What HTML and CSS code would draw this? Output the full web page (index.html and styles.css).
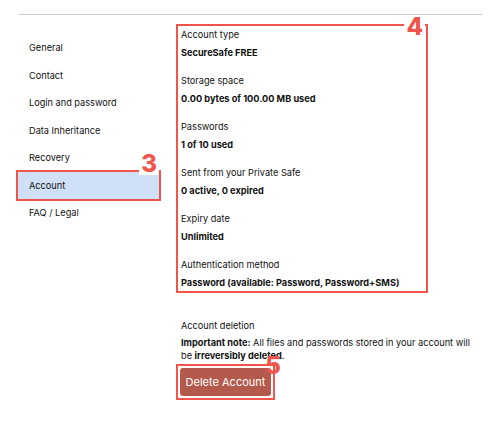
FILE: index.html
```html
<!DOCTYPE html>
<html>
<head>
<meta charset="utf-8">
<link rel="stylesheet" href="styles.css">
</head>
<body>
<div class="page">
  <div class="layout">
    <nav class="sidenav">
      <div class="nav-item">General</div>
      <div class="nav-item">Contact</div>
      <div class="nav-item">Login and password</div>
      <div class="nav-item">Data Inheritance</div>
      <div class="nav-item">Recovery</div>
      <div class="nav-item active">Account<span class="badge badge-3">3</span></div>
      <div class="nav-item">FAQ / Legal</div>
    </nav>
    <main class="content">
      <section class="info">
        <span class="badge badge-4">4</span>
        <div class="field"><div class="label">Account type</div><div class="value">SecureSafe FREE</div></div>
        <div class="field"><div class="label">Storage space</div><div class="value">0.00 bytes of 100.00 MB used</div></div>
        <div class="field"><div class="label">Passwords</div><div class="value">1 of 10 used</div></div>
        <div class="field"><div class="label">Sent from your Private Safe</div><div class="value">0 active, 0 expired</div></div>
        <div class="field"><div class="label">Expiry date</div><div class="value">Unlimited</div></div>
        <div class="field"><div class="label">Authentication method</div><div class="value">Password (available: Password, Password+SMS)</div></div>
      </section>
      <section class="deletion">
        <div class="label">Account deletion</div>
        <p class="note"><strong>Important note:</strong> All files and passwords stored in your account will be <strong>irreversibly deleted</strong>.</p>
        <div class="btn-wrap">
          <button class="btn-delete">Delete Account</button>
          <span class="badge badge-5">5</span>
        </div>
      </section>
    </main>
  </div>
</div>
</body>
</html>
```
FILE: styles.css
```css
* { box-sizing: border-box; }
html, body { margin: 0; padding: 0; background: #fff; }
body {
  font-family: Inter, "Noto Sans", sans-serif;
  font-size: 9.2px;
  color: #111;
}
.page {
  margin: 14px 18px 0 19px;
  border-top: 1px solid #cccccc;
}
.layout {
  display: flex;
  margin-left: -1px;
}
.sidenav {
  width: 141px;
  margin-top: 19px;
  margin-right: 17px;
}
.nav-item {
  position: relative;
  height: 27.5px;
  line-height: 27.5px;
  padding-left: 11px;
}
.nav-item.active {
  background: #d0e0f7;
  outline: 2px solid #f0554c;
  outline-offset: 0;
}
.content {
  width: 252px;
  margin-top: 9px;
}
.info {
  position: relative;
  border: 2px solid #f0554c;
  padding: 0 3px;
}
.field { margin-bottom: 11px; }
.field:last-of-type { margin-bottom: 0; }
.label { line-height: 17.5px; }
.value { line-height: 17.5px; font-weight: 700; }
.deletion {
  padding: 24px 5px 0 5px;
  width: 300px;
}
.deletion .label { line-height: 17px; }
.note {
  margin: 2px 0 0 0;
  line-height: 13px;
}
.note strong { font-weight: 700; }
.btn-wrap {
  position: relative;
  display: inline-block;
  margin-top: 2px;
  margin-left: -5px;
  padding: 2px;
  border: 2px solid #f0554c;
}
.btn-delete {
  display: block;
  width: 91px;
  height: 28px;
  border: none;
  border-radius: 3px;
  background: #b45a4c;
  color: #fff;
  font-family: Inter, "Noto Sans", sans-serif;
  font-size: 11px;
  padding: 0;
}
.badge {
  position: absolute;
  color: #f0554c;
  font-weight: 800;
  font-size: 24px;
  line-height: 22px;
  background: #fff;
  padding: 0 2px;
  font-family: Inter, "Noto Sans", sans-serif;
}
.badge-3 { right: 0px; top: -19px; }
.badge-4 { right: 1px; top: -10px; }
.badge-5 { right: -10px; top: -11px; background: transparent; }
```
